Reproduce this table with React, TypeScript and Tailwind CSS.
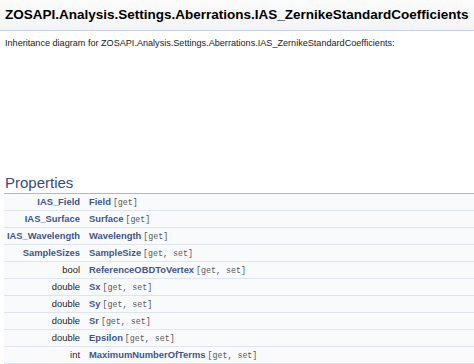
import React from "react";

const rows: { left: string; leftLink?: boolean; name: string; acc: string }[] = [
  { left: "IAS_Field", leftLink: true, name: "Field", acc: "[get]" },
  { left: "IAS_Surface", leftLink: true, name: "Surface", acc: "[get]" },
  { left: "IAS_Wavelength", leftLink: true, name: "Wavelength", acc: "[get]" },
  { left: "SampleSizes", leftLink: true, name: "SampleSize", acc: "[get, set]" },
  { left: "bool", name: "ReferenceOBDToVertex", acc: "[get, set]" },
  { left: "double", name: "Sx", acc: "[get, set]" },
  { left: "double", name: "Sy", acc: "[get, set]" },
  { left: "double", name: "Sr", acc: "[get, set]" },
  { left: "double", name: "Epsilon", acc: "[get, set]" },
  { left: "int", name: "MaximumNumberOfTerms", acc: "[get, set]" },
];

export default function App() {
  return (
    <div className="w-[474px] h-[364px] overflow-hidden bg-white font-['Liberation_Sans',Arial,sans-serif]">
      <div className="h-[31px] bg-gradient-to-b from-[#fbfbfc] to-[#f3f4f7] border-b border-[#c4cfe5] pl-[5px] pt-[6px]">
        <div className="text-[13.5px] leading-[18px] font-bold text-black whitespace-nowrap">
          ZOSAPI.Analysis.Settings.Aberrations.IAS_ZernikeStandardCoefficients
        </div>
      </div>
      <div className="pl-[5px] pt-[7px] text-[9.1px] leading-[11px] text-[#222] whitespace-nowrap">
        Inheritance diagram for ZOSAPI.Analysis.Settings.Aberrations.IAS_ZernikeStandardCoefficients:
      </div>
      <div className="h-[125px]" />
      <div className="pl-[5px] text-[15px] leading-[18px] text-[#354c7b]">Properties</div>
      <div className="ml-[4px] mt-[1px] border-b border-[#a9b8d5]" />
      <div className="ml-[4px]">
        {rows.map((r, i) => (
          <div key={i} className="flex h-[17px] bg-[#f9fafc] border-b border-[#dee4f0] items-center text-[9.4px] leading-[12px]">
            <div className={"w-[80px] pr-[4px] text-right whitespace-nowrap " + (r.leftLink ? "font-bold text-[#3d578c]" : "text-[#222]")}>
              {r.left}
            </div>
            <div className="pl-[5px] whitespace-nowrap flex items-baseline">
              <span className="font-bold text-[#3d578c]">{r.name}</span>
              <span className="font-['Liberation_Mono',monospace] text-[8.3px] text-[#555] ml-[2px]">{r.acc}</span>
            </div>
          </div>
        ))}
      </div>
    </div>
  );
}
